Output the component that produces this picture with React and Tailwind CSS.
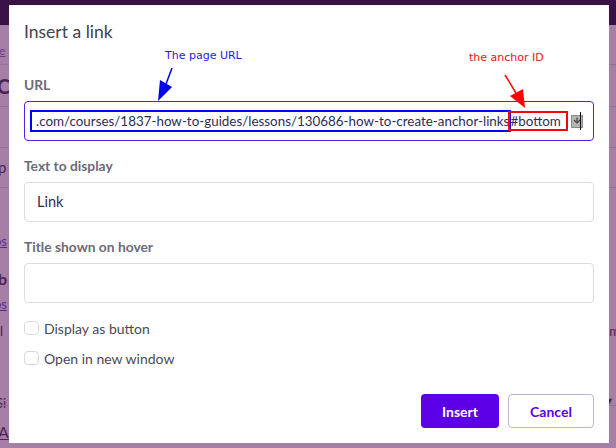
import React from 'react';

const Field = ({ label, children, className = '' }) => (
  <div className={className}>
    <div className="text-[13.8px] leading-[18px] font-bold text-[#6c6b78] mb-[7px]">{label}</div>
    {children}
  </div>
);

const Check = ({ label, className = '' }) => (
  <label className={`flex items-center h-5 ${className}`}>
    <span className="w-[15px] h-[14px] rounded-[4px] border border-[#d9d8e0] bg-white" />
    <span className="ml-[5px] text-[14px] text-[#4a4956]">{label}</span>
  </label>
);

const App = () => {
  return (
    <div className="relative w-[616px] h-[448px] overflow-hidden bg-[#a67fa6]" style={{ fontFamily: 'Lato, "Liberation Sans", sans-serif' }}>
      {/* page behind the overlay */}
      <div className="h-[25px] bg-[#3a1146]" />
      <div className="flex flex-col text-[#4b2352]">
        <div className="h-[40px] flex items-end justify-between pb-[4px] border-b border-[#97709a]">
          <span className="text-[12px] underline -ml-[1px] text-[#6a3f80]">e</span>
        </div>
        <div className="h-[42px] flex items-center border-b border-[#97709a]">
          <span className="text-[20px] font-bold -ml-[3px]">C</span>
        </div>
        <div className="h-[41px] border-b border-[#97709a]" />
        <div className="h-[40px] flex items-center border-b border-[#97709a]">
          <span className="text-[15px] -ml-[2px]">p</span>
        </div>
        <div className="h-[217px] flex flex-col text-[13px]">
          <span className="mt-[44px] underline text-[#5b2d8a] -ml-[6px]">os</span>
          <span className="mt-[15px] text-[16px] font-bold -ml-[2px]">b</span>
          <span className="mt-[4px] underline text-[#5b2d8a] -ml-[6px]">os</span>
          <div className="mt-[8px] flex justify-between">
            <span className="-ml-[3px]">il</span>
            <span className="-mr-[4px]">m</span>
          </div>
          <div className="mt-[52px] flex justify-between">
            <span className="-ml-[4px]">Si</span>
            <span className="text-[9px] mr-[2px]">▼</span>
          </div>
        </div>
        <div className="border-t border-[#97709a] pt-[14px]">
          <span className="text-[16px] underline -ml-[2px]">A</span>
        </div>
      </div>

      {/* dialog */}
      <div className="absolute left-[9px] top-[5px] w-[600px] h-[438px] bg-white flex flex-col px-[15px] pt-[15px] pb-[15px]">
        <h2 className="text-[17.5px] leading-[24px] text-[#43424f]">Insert a link</h2>

        <Field label="URL" className="mt-[32px]">
          <div className="h-[40px] rounded-[4px] border border-[#5a1de6] flex items-center pl-[5px] overflow-hidden whitespace-nowrap text-[13.4px] text-[#2e2c55]">
            <span className="h-[22px] border-2 border-[#0000ff] pl-[4px] flex items-center shrink-0">
              .com/courses/1837-how-to-guides/lessons/130686-how-to-create-anchor-links
            </span>
            <span className="h-[20px] border-2 border-[#ff0000] -ml-[3px] pr-[5px] flex items-center shrink-0">#bottom</span>
            <span className="ml-[3px] w-[12px] h-[13px] bg-[#b4b4b4] border border-[#8a8a8a] flex items-center justify-center shrink-0">
              <svg width="8" height="8" viewBox="0 0 8 8">
                <path d="M1 3 L4 6 L7 3" fill="none" stroke="#444" strokeWidth="1.2" />
                <path d="M4 0.5 V6" stroke="#444" strokeWidth="1.2" />
              </svg>
            </span>
            <span className="-ml-[3px] w-px h-[18px] bg-[#111]" />
          </div>
        </Field>

        <Field label="Text to display" className="mt-[16px]">
          <div className="h-[40px] rounded-[4px] border border-[#dcdbe3] flex items-center px-[12px] text-[14.5px] text-[#2e2c55]">Link</div>
        </Field>

        <Field label="Title shown on hover" className="mt-[16px]">
          <div className="h-[40px] rounded-[4px] border border-[#dcdbe3]" />
        </Field>

        <Check label="Display as button" className="mt-[15px]" />
        <Check label="Open in new window" className="mt-[10px]" />

        <div className="mt-auto flex justify-end gap-[9px]">
          <button className="w-[78px] h-[34px] rounded-[4px] bg-[#5c00e8] text-white text-[14px] font-bold">Insert</button>
          <button className="w-[86px] h-[34px] rounded-[4px] border border-[#b9b6d8] bg-white text-[#5c00e8] text-[14px] font-bold">Cancel</button>
        </div>
      </div>

      {/* annotations */}
      <span className="absolute left-[165px] top-[48px] text-[11px] text-[#1c1ce8]" style={{ fontFamily: '"DejaVu Sans", sans-serif' }}>The page URL</span>
      <span className="absolute left-[469px] top-[50px] text-[11px] text-[#f01010]" style={{ fontFamily: '"DejaVu Sans", sans-serif' }}>the anchor ID</span>
      <svg className="absolute inset-0 pointer-events-none" width="616" height="448" viewBox="0 0 616 448">
        <line x1="172" y1="68" x2="166" y2="84" stroke="#0000ee" strokeWidth="1.5" />
        <polygon points="158,101 160,80 172,87" fill="#0000ee" />
        <line x1="505" y1="75" x2="516" y2="93" stroke="#ff0000" strokeWidth="1.5" />
        <polygon points="525,108 510,96 523,89" fill="#ff0000" />
      </svg>
    </div>
  );
};

export default App;
